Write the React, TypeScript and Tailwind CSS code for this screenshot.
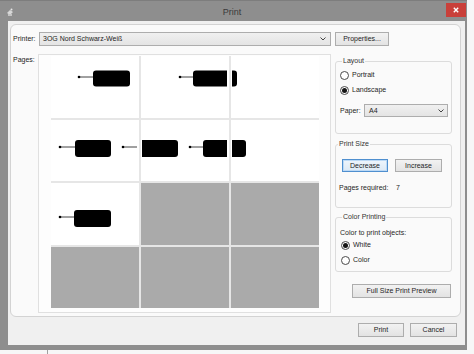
import React from "react";

type Piece = { x: number; y: number; w: number; h: number; l?: boolean; r?: boolean };
type Lead = { x1: number; x2: number; y: number; dot?: boolean };
type Cell = { gray?: boolean; pieces?: Piece[]; leads?: Lead[] };

// rounded rect path, corners rounded only on the requested sides
function piecePath({ x, y, w, h, l = true, r = true }: Piece) {
    const rad = 3;
    const rl = l ? rad : 0;
    const rr = r ? rad : 0;
    return [
        `M${x + rl},${y}`,
        `H${x + w - rr}`,
        rr ? `Q${x + w},${y} ${x + w},${y + rr}` : "",
        `V${y + h - rr}`,
        rr ? `Q${x + w},${y + h} ${x + w - rr},${y + h}` : "",
        `H${x + rl}`,
        rl ? `Q${x},${y + h} ${x},${y + h - rl}` : "",
        `V${y + rl}`,
        rl ? `Q${x},${y} ${x + rl},${y}` : "",
        "Z",
    ].join(" ");
}

const CELLS: Cell[] = [
    { pieces: [{ x: 42, y: 14.5, w: 37, h: 16 }], leads: [{ x1: 28, x2: 42, y: 21 }] },
    { pieces: [{ x: 52, y: 14.5, w: 34, h: 16, r: false }], leads: [{ x1: 39, x2: 52, y: 21 }] },
    { pieces: [{ x: 1, y: 14.5, w: 5, h: 16, l: false }] },
    {
        pieces: [{ x: 24, y: 20, w: 36, h: 17 }],
        leads: [
            { x1: 9, x2: 24, y: 27 },
            { x1: 72, x2: 86, y: 27 },
        ],
    },
    {
        pieces: [
            { x: 1, y: 20, w: 36, h: 17, l: false },
            { x: 62, y: 20, w: 24, h: 17, r: false },
        ],
        leads: [{ x1: 49, x2: 62, y: 27 }],
    },
    { pieces: [{ x: 1, y: 20, w: 14, h: 17, l: false }] },
    { pieces: [{ x: 23, y: 27, w: 37, h: 17 }], leads: [{ x1: 9, x2: 23, y: 34 }] },
    { gray: true },
    { gray: true },
    { gray: true },
    { gray: true },
    { gray: true },
];

function Page({ cell }: { cell: Cell }) {
    if (cell.gray) return <div className="bg-[#aaaaaa]" />;
    return (
        <div className="bg-white">
            <svg width="88" height="62" className="block">
                {cell.leads?.map((ld, i) => (
                    <g key={i}>
                        <line x1={ld.x1} y1={ld.y} x2={ld.x2} y2={ld.y} stroke="#111" strokeWidth="0.8" />
                        <circle cx={ld.x1} cy={ld.y} r="1.3" fill="#000" />
                    </g>
                ))}
                {cell.pieces?.map((p, i) => (
                    <path key={i} d={piecePath(p)} fill="#000" />
                ))}
            </svg>
        </div>
    );
}

function Radio({ checked, label }: { checked?: boolean; label: string }) {
    return (
        <div className="flex items-center h-[10px]">
            <span className="w-[9px] h-[9px] rounded-full border border-[#4a4a4a] bg-white flex items-center justify-center">
                {checked && <span className="w-[5px] h-[5px] rounded-full bg-[#151515]" />}
            </span>
            <span className="ml-[3px]">{label}</span>
        </div>
    );
}

function Chevron() {
    return (
        <svg width="6" height="4" viewBox="0 0 6 4" className="shrink-0">
            <path d="M0.5 0.5 L3 3 L5.5 0.5" fill="none" stroke="#444" strokeWidth="1" />
        </svg>
    );
}

function Btn({ children, className = "" }: { children: React.ReactNode; className?: string }) {
    return (
        <div
            className={`h-[14px] flex items-center justify-center border border-[#adadad] bg-gradient-to-b from-[#f2f2f2] to-[#e3e3e3] ${className}`}
        >
            {children}
        </div>
    );
}

function Group({ title, className = "", children }: { title: string; className?: string; children: React.ReactNode }) {
    return (
        <fieldset className={`border border-[#dcdcdc] rounded-[3px] ${className}`}>
            <legend className="ml-[2px] px-[1px] leading-[8px] text-[#333]">{title}</legend>
            {children}
        </fieldset>
    );
}

export default function App() {
    return (
        <div className="w-[474px] h-[354px] bg-[#f7f7f7] overflow-hidden font-['Liberation_Sans',Arial,sans-serif] text-[7px] leading-[8px] text-[#1e1e1e]">
            <div className="w-[467px] h-[350px] bg-[#8e8e8e] flex flex-col border-t border-[#7d7d7d]">
                {/* title bar */}
                <div className="h-[20px] flex items-center">
                    <svg width="8" height="9" viewBox="0 0 8 9" className="ml-[6px] mt-[2px]">
                        <path d="M1 5 L4 2 L7 4 L4 7 Z" fill="#d8d8d8" />
                        <rect x="2" y="6" width="4" height="2" fill="#c4c4c4" />
                        <circle cx="5.5" cy="1.5" r="1" fill="#e6e6e6" />
                    </svg>
                    <div className="flex-1 text-center text-[9px] leading-[10px] text-[#3a3a3a] mt-[1px] pl-[4px]">Print</div>
                    <div className="self-start w-[20px] h-[14px] mt-[2px] mr-[1px] bg-[#c9403a] flex items-center justify-center">
                        <svg width="6" height="6" viewBox="0 0 6 6">
                            <path d="M0.8 0.8 L5.2 5.2 M5.2 0.8 L0.8 5.2" stroke="#fff" strokeWidth="1.4" />
                        </svg>
                    </div>
                </div>

                {/* client area */}
                <div className="ml-[8px] mr-[2px] h-[324px] bg-[#f0f0f0] pt-[3px] pl-[2px] pr-[4px] flex flex-col">
                    <div className="h-[293px] border border-[#d3d3d3] rounded-[6px] bg-[#fafafa] pt-[7px] pl-[2px]">
                        {/* printer row */}
                        <div className="flex items-center h-[14px]">
                            <div className="w-[26px]">Printer:</div>
                            <div className="w-[292px] h-[14px] border border-[#adadad] bg-gradient-to-b from-[#f0f0f0] to-[#e4e4e4] flex items-center pl-[3px] pr-[4px]">
                                <span className="flex-1">3OG Nord Schwarz-Weiß</span>
                                <Chevron />
                            </div>
                            <Btn className="w-[54px] ml-[4px]">Properties...</Btn>
                        </div>

                        <div className="flex mt-[8px]">
                            <div className="w-[25px] pt-[2px]">Pages:</div>
                            {/* page preview frame */}
                            <div className="w-[293px] h-[259px] border border-[#e0e0e0] bg-[#fdfdfd] overflow-hidden pl-[12px] pt-[1px]">
                                <div className="grid grid-cols-[88px_88px_88px] grid-rows-[62px_61px_62px_61px] gap-[2px] bg-[#e6e6e6] w-[268px]">
                                    {CELLS.map((c, i) => (
                                        <Page key={i} cell={c} />
                                    ))}
                                </div>
                            </div>

                            {/* right column */}
                            <div className="w-[117px] ml-[4px] flex flex-col">
                                <Group title="Layout" className="mt-[3px] h-[77px] pl-[4px]">
                                    <div className="mt-[5px]">
                                        <Radio label="Portrait" />
                                    </div>
                                    <div className="mt-[5px]">
                                        <Radio checked label="Landscape" />
                                    </div>
                                    <div className="mt-[9px] flex items-center">
                                        <div className="w-[24px]">Paper:</div>
                                        <div className="w-[84px] h-[13px] border border-[#adadad] bg-gradient-to-b from-[#f0f0f0] to-[#e4e4e4] flex items-center pl-[4px] pr-[3px]">
                                            <span className="flex-1">A4</span>
                                            <Chevron />
                                        </div>
                                    </div>
                                </Group>

                                <Group title="Print Size" className="mt-[6px] h-[68px]">
                                    <div className="mt-[11px] flex pl-[6px] gap-[7px]">
                                        <div className="w-[46px] h-[13px] flex items-center justify-center border border-[#4f8fcf] bg-gradient-to-b from-[#eef5fc] to-[#dde9f5] shadow-[inset_0_0_0_1px_#bcd9f5]">
                                            Decrease
                                        </div>
                                        <div className="w-[47px] h-[13px] flex items-center justify-center border border-[#adadad] bg-gradient-to-b from-[#f2f2f2] to-[#e3e3e3]">
                                            Increase
                                        </div>
                                    </div>
                                    <div className="mt-[12px] flex pl-[3px]">
                                        <div className="w-[57px]">Pages required:</div>
                                        <div>7</div>
                                    </div>
                                </Group>

                                <Group title="Color Printing" className="mt-[5px] h-[59px] pl-[4px]">
                                    <div className="mt-[8px]">Color to print objects:</div>
                                    <div className="mt-[3px] pl-[1px]">
                                        <Radio checked label="White" />
                                    </div>
                                    <div className="mt-[5px] pl-[1px]">
                                        <Radio label="Color" />
                                    </div>
                                </Group>

                                <Btn className="mt-[12px] ml-[17px] w-[99px]">Full Size Print Preview</Btn>
                            </div>
                        </div>
                    </div>

                    {/* dialog buttons */}
                    <div className="flex justify-end gap-[6px] pt-[6px] pr-[4px]">
                        <Btn className="w-[46px]">Print</Btn>
                        <Btn className="w-[47px]">Cancel</Btn>
                    </div>
                </div>
            </div>
            <div className="ml-[47px] w-px h-[4px] bg-[#a0a0a0]" />
        </div>
    );
}
